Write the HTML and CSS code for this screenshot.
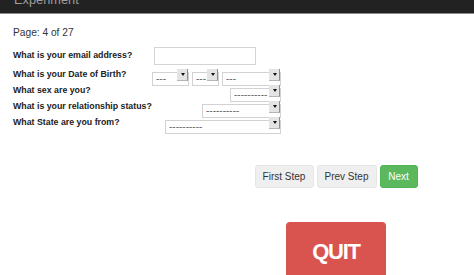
FILE: index.html
```html
<!DOCTYPE html>
<html lang="en">
<head>
<meta charset="utf-8">
<title>Experiment</title>
<link rel="stylesheet" href="styles.css">
</head>
<body>
<header class="navbar">
  <div class="brand">Experiment</div>
</header>
<main class="page">
  <p class="page-count">Page: 4 of 27</p>
  <form class="survey">
    <div class="row">
      <label class="label" for="email">What is your email address?</label>
      <input class="text-input" id="email" type="text">
    </div>
    <div class="row">
      <label class="label">What is your Date of Birth?</label>
      <span class="dob">
        <span class="sel w-month"><select><option>---</option></select></span>
        <span class="sel w-day"><select><option>---</option></select></span>
        <span class="sel w-year"><select><option>---</option></select></span>
      </span>
    </div>
    <div class="row">
      <label class="label">What sex are you?</label>
      <span class="sel w-sex"><select><option>----------</option></select></span>
    </div>
    <div class="row">
      <label class="label">What is your relationship status?</label>
      <span class="sel w-rel"><select><option>----------</option></select></span>
    </div>
    <div class="row">
      <label class="label">What State are you from?</label>
      <span class="sel w-state"><select><option>----------</option></select></span>
    </div>
  </form>
  <section class="actions">
    <div class="steps">
      <button class="btn btn-default btn-first" type="button">First Step</button>
      <button class="btn btn-default btn-prev" type="button">Prev Step</button>
      <button class="btn btn-success btn-next" type="button">Next</button>
    </div>
    <button class="btn-quit" type="button">QUIT</button>
  </section>
</main>
</body>
</html>
```
FILE: styles.css
```css
* { box-sizing: border-box; }
html, body { margin: 0; padding: 0; background: #fff; }
body {
  font-family: "Liberation Sans", Arial, Helvetica, sans-serif;
  color: #333;
  width: 474px;
  height: 275px;
  overflow: hidden;
}
.navbar {
  height: 14px;
  background: #222;
  border-bottom: 1px solid #8a8a8a;
  overflow: hidden;
}
.brand {
  margin-top: -7px;
  padding-left: 14px;
  font-size: 12.8px;
  line-height: 13px;
  color: #9d9d9d;
}
.page { padding: 12px 0 0 13px; }
.page-count {
  margin: 0;
  font-size: 10.2px;
  line-height: 14px;
}
.survey {
  margin-top: 7px;
  width: 268px;
  display: flex;
  flex-direction: column;
  gap: 2px;
}
.row {
  display: flex;
  justify-content: space-between;
  align-items: center;
  height: 14px;
}
.row:first-child { height: 18px; margin-bottom: 1px; }
.label {
  font-weight: bold;
  font-size: 8.8px;
  line-height: 12px;
  color: #222;
  margin-top: -3px;
}
.text-input {
  width: 102px;
  height: 18px;
  margin: 0 25px 0 0;
  border: 1px solid #d4d4d4;
  padding: 0;
  background: #fff;
}
.dob { display: flex; gap: 3px; }
.sel {
  position: relative;
  display: block;
  height: 14px;
}
.sel select {
  -webkit-appearance: none;
  appearance: none;
  width: 100%;
  height: 14px;
  margin: 0;
  padding: 0 10px 0 3px;
  border: 1px solid #d2d2d2;
  border-radius: 0;
  background: #fff;
  font-family: "Liberation Sans", Arial, sans-serif;
  font-size: 10px;
  line-height: 12px;
  color: #666;
}
.sel::after {
  content: "";
  position: absolute;
  top: 1px;
  right: 1px;
  bottom: 1px;
  width: 10px;
  background: #e4e4e4;
  border-right: 1px solid #8f8f8f;
  border-bottom: 1px solid #b5b5b5;
}
.sel::before {
  content: "";
  position: absolute;
  z-index: 1;
  top: 5px;
  right: 4px;
  width: 0;
  height: 0;
  border-left: 2.5px solid transparent;
  border-right: 2.5px solid transparent;
  border-top: 3px solid #111;
}
.w-month { width: 37px; }
.w-day { width: 27px; }
.w-year { width: 59px; }
.w-sex { width: 51px; }
.w-rel { width: 79px; }
.w-state { width: 116px; }
.actions {
  margin: 35px 0 0 185px;
  width: 276px;
  display: flex;
  flex-direction: column;
  align-items: center;
}
.steps { display: flex; gap: 3px; }
.btn {
  height: 23px;
  padding: 0;
  border: 1px solid #e6e6e6;
  border-radius: 3px;
  font-family: "Liberation Sans", Arial, sans-serif;
  font-size: 10px;
  line-height: 21px;
  text-align: center;
}
.btn-first { width: 59px; }
.btn-prev { width: 60px; }
.btn-next { width: 38px; }
.btn-default { background: #efefef; color: #333; }
.btn-success { background: #5cb85c; border-color: #53b253; color: #fff; }
.btn-quit {
  margin-top: 34px;
  width: 100px;
  height: 60px;
  border: none;
  border-radius: 4px;
  background: #d9534f;
  color: #fff;
  font-family: "Liberation Sans", Arial, sans-serif;
  font-weight: bold;
  font-size: 22px;
  letter-spacing: -1.3px;
  padding: 0;
}
```
